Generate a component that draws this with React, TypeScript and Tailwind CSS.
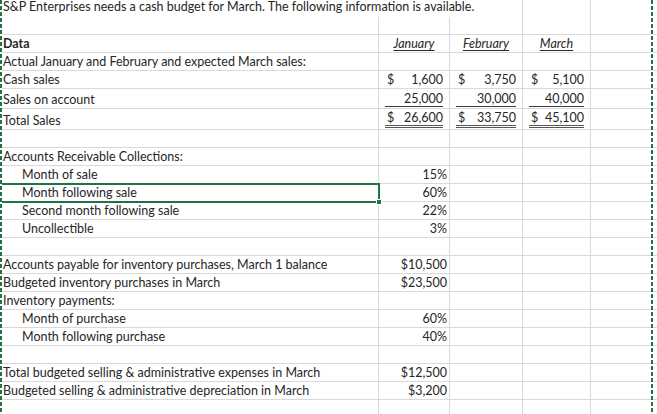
import React from "react";

type RowProps = {
  h: string;
  a?: React.ReactNode;
  b?: React.ReactNode;
  c?: React.ReactNode;
  d?: React.ReactNode;
  indent?: boolean;
};

function Row({ h, a, b, c, d, indent }: RowProps) {
  return (
    <div className={`flex shrink-0 border-b border-[#d9d9d9] ${h}`}>
      <div
        className={`flex w-[379px] shrink-0 items-end whitespace-nowrap border-r border-[#d9d9d9] leading-[16px] ${
          indent ? "pl-[22px]" : "pl-[3px]"
        }`}
      >
        {a}
      </div>
      <div className="flex w-[71px] shrink-0 items-end border-r border-[#d9d9d9] leading-[16px]">{b}</div>
      <div className="flex w-[73px] shrink-0 items-end border-r border-[#d9d9d9] leading-[16px]">{c}</div>
      <div className="flex w-[68px] shrink-0 items-end border-r border-[#d9d9d9] leading-[16px]">{d}</div>
      <div className="w-[62px] shrink-0" />
      <div className="flex-1" />
    </div>
  );
}

function Acct({ dollar, value, under }: { dollar?: boolean; value: string; under?: "single" | "double" }) {
  const u =
    under === "single"
      ? "border-b border-[#3a3a3a]"
      : under === "double"
      ? "border-b-[3px] border-double border-[#555]"
      : "";
  return (
    <div className={`mx-[6px] mb-[1px] flex flex-1 justify-between leading-[15px] ${u}`}>
      <span className="pl-[2px]">{dollar ? "$" : ""}</span>
      <span>{value}</span>
    </div>
  );
}

function Right({ v }: { v: string }) {
  return <div className="flex-1 pr-[2px] text-right">{v}</div>;
}

function Head({ t }: { t: string }) {
  return <span className="mx-auto italic underline underline-offset-2">{t}</span>;
}

export default function App() {
  return (
    <div className="relative h-[414px] w-[657px] overflow-hidden bg-white font-['Lato',sans-serif] text-[12.5px] text-[#262626]">
      <div className="flex h-full flex-col">
        <div className="flex h-[17px] shrink-0">
          <div className="flex w-[523px] shrink-0 items-end whitespace-nowrap border-r border-[#d9d9d9] pb-[2px] pl-[3px] leading-[16px]">
            S&amp;P Enterprises needs a cash budget for March. The following information is available.
          </div>
          <div className="w-[68px] shrink-0 border-r border-[#d9d9d9]" />
          <div className="w-[62px] shrink-0" />
          <div className="flex-1" />
        </div>
        <Row h="h-[18px]" />
        <Row
          h="h-[18px]"
          a={<span className="font-bold">Data</span>}
          b={<Head t="January" />}
          c={<Head t="February" />}
          d={<Head t="March" />}
        />
        <Row h="h-[18px]" a="Actual January and February and expected March sales:" />
        <Row
          h="h-[18px]"
          a="Cash sales"
          b={<Acct dollar value="1,600" />}
          c={<Acct dollar value="3,750" />}
          d={<Acct dollar value="5,100" />}
        />
        <Row
          h="h-[20px]"
          a="Sales on account"
          b={<Acct value="25,000" under="single" />}
          c={<Acct value="30,000" under="single" />}
          d={<Acct value="40,000" under="single" />}
        />
        <Row
          h="h-[21px]"
          a="Total Sales"
          b={<Acct dollar value="26,600" under="double" />}
          c={<Acct dollar value="33,750" under="double" />}
          d={<Acct dollar value="45,100" under="double" />}
        />
        <Row h="h-[18px]" />
        <Row h="h-[18px]" a="Accounts Receivable Collections:" />
        <Row h="h-[18px]" indent a="Month of sale" b={<Right v="15%" />} />
        <Row h="h-[18px]" indent a="Month following sale" b={<Right v="60%" />} />
        <Row h="h-[18px]" indent a="Second month following sale" b={<Right v="22%" />} />
        <Row h="h-[18px]" indent a="Uncollectible" b={<Right v="3%" />} />
        <Row h="h-[18px]" />
        <Row h="h-[18px]" a="Accounts payable for inventory purchases, March 1 balance" b={<Right v="$10,500" />} />
        <Row h="h-[18px]" a="Budgeted inventory purchases in March" b={<Right v="$23,500" />} />
        <Row h="h-[18px]" a="Inventory payments:" />
        <Row h="h-[18px]" indent a="Month of purchase" b={<Right v="60%" />} />
        <Row h="h-[18px]" indent a="Month following purchase" b={<Right v="40%" />} />
        <Row h="h-[18px]" />
        <Row
          h="h-[18px]"
          a="Total budgeted selling & administrative expenses in March"
          b={<Right v="$12,500" />}
        />
        <Row h="h-[18px]" a="Budgeted selling & administrative depreciation in March" b={<Right v="$3,200" />} />
        <div className="flex flex-1">
          <div className="w-[379px] shrink-0 border-r border-[#d9d9d9]" />
          <div className="w-[71px] shrink-0 border-r border-[#d9d9d9]" />
          <div className="w-[73px] shrink-0 border-r border-[#d9d9d9]" />
          <div className="w-[68px] shrink-0 border-r border-[#d9d9d9]" />
        </div>
      </div>

      {/* selected cell */}
      <div className="absolute left-0 top-[183px] h-[20px] w-[380px] border-2 border-[#217346]" />
      <div className="absolute left-[376px] top-[199px] h-[6px] w-[6px] border border-white bg-[#217346]" />

      {/* copy marquee */}
      <div className="absolute left-0 top-0 h-full w-[2px] bg-[repeating-linear-gradient(to_bottom,#217346_0px,#217346_4px,#ffffff_4px,#ffffff_6px)]" />
      <div className="absolute left-[651px] top-0 h-full w-[2px] bg-[repeating-linear-gradient(to_bottom,#217346_0px,#217346_4px,#ffffff_4px,#ffffff_6px)]" />
    </div>
  );
}
